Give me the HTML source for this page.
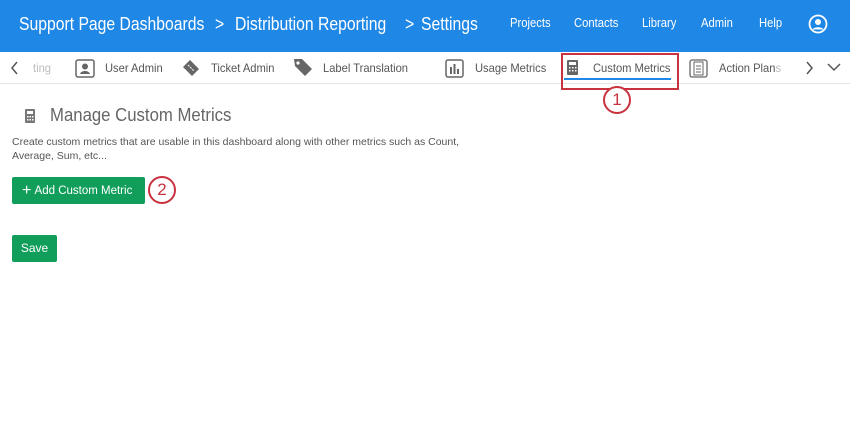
<!DOCTYPE html>
<html><head><style>
*{margin:0;padding:0;box-sizing:border-box}
body{width:850px;height:426px;background:#fff;font-family:"Liberation Sans",sans-serif;position:relative;overflow:hidden}
.a{position:absolute;white-space:nowrap}
.hd{position:absolute;left:0;top:0;width:850px;height:52px;background:#1f87e5}
.bc{color:#fff;font-size:18.5px;top:13px;transform:scaleX(0.85);transform-origin:left}
.nav{color:#fff;font-size:12.5px;top:16px;transform:scaleX(0.9);transform-origin:left}
.tab{color:#555;font-size:12px;top:61px;transform:scaleX(0.93);transform-origin:left}
.btn{background:#119e5a;color:#fff;border-radius:2px;font-size:12px}
.circ{border:2px solid #c9323f;border-radius:50%;color:#c9323f;text-align:center;background:#fff}
</style></head><body>
<div class="hd"></div>
<div class="a bc" style="left:19px">Support Page Dashboards</div>
<div class="a bc" style="left:215px">&gt;</div>
<div class="a bc" style="left:235px">Distribution Reporting</div>
<div class="a bc" style="left:405px">&gt;</div>
<div class="a bc" style="left:421px">Settings</div>
<div class="a nav" style="left:510px">Projects</div>
<div class="a nav" style="left:574px">Contacts</div>
<div class="a nav" style="left:642px">Library</div>
<div class="a nav" style="left:701px">Admin</div>
<div class="a nav" style="left:759px">Help</div>
<svg class="a" style="left:808px;top:14px" width="20" height="20" viewBox="0 0 20 20"><circle cx="10" cy="10" r="8.5" fill="none" stroke="#fff" stroke-width="1.8"/><circle cx="10" cy="8" r="3" fill="#fff"/><path d="M4.5 15.5c1.5-3 9.5-3 11 0" fill="#fff"/></svg>
<div class="a" style="left:0;top:83px;width:850px;height:1px;background:#e6e6e6"></div>
<svg class="a" style="left:10px;top:61px" width="10" height="14"><path d="M7 1L2 7l5 6" fill="none" stroke="#555" stroke-width="1.5"/></svg>
<div class="a tab" style="left:33px;color:#bbb">ting</div>
<svg class="a" style="left:75px;top:59px" width="20" height="19"><rect x="1" y="1" width="18" height="17" rx="2" fill="none" stroke="#666" stroke-width="1.5"/><circle cx="10" cy="7.5" r="3" fill="#666"/><path d="M5 15c1-4 9-4 10 0z" fill="#666"/></svg>
<div class="a tab" style="left:105px">User Admin</div>
<svg class="a" style="left:181px;top:58px" width="20" height="20"><path d="M2 9l7-7 9 9-7 7z" fill="#666"/><path d="M7 7l6 6" stroke="#fff" stroke-width="1" stroke-dasharray="2 1"/></svg>
<div class="a tab" style="left:211px">Ticket Admin</div>
<svg class="a" style="left:293px;top:57px" width="20" height="20"><path d="M1 2h8l10 10-7 7L2 9z" fill="#666"/><circle cx="5" cy="6" r="1.6" fill="#fff"/></svg>
<div class="a tab" style="left:323px">Label Translation</div>
<svg class="a" style="left:445px;top:59px" width="19" height="19"><rect x="1" y="1" width="17" height="17" rx="2" fill="none" stroke="#666" stroke-width="1.5"/><rect x="5" y="8" width="2" height="7" fill="#666"/><rect x="8.5" y="5" width="2" height="10" fill="#666"/><rect x="12" y="10" width="2" height="5" fill="#666"/></svg>
<div class="a tab" style="left:475px">Usage Metrics</div>
<svg class="a" style="left:567px;top:60px" width="11" height="15"><rect x="0" y="0" width="11" height="15" rx="1" fill="#666"/><rect x="2" y="2" width="7" height="3" fill="#fff"/><g fill="#fff"><rect x="2" y="7" width="1.5" height="1.5"/><rect x="5" y="7" width="1.5" height="1.5"/><rect x="8" y="7" width="1.5" height="1.5"/><rect x="2" y="10" width="1.5" height="1.5"/><rect x="5" y="10" width="1.5" height="1.5"/><rect x="8" y="10" width="1.5" height="1.5"/></g></svg>
<div class="a tab" style="left:593px">Custom Metrics</div>
<div class="a" style="left:564px;top:78px;width:107px;height:2px;background:#1f87e5"></div>
<div class="a" style="left:561px;top:53px;width:118px;height:37px;border:2px solid #c9323f"></div>
<div class="a circ" style="left:603px;top:86px;width:28px;height:28px;font-size:17px;line-height:24px">1</div>
<svg class="a" style="left:689px;top:58px" width="19" height="20"><rect x="1" y="2" width="17" height="17" rx="2" fill="none" stroke="#666" stroke-width="1.3"/><rect x="5" y="4" width="9" height="13" fill="none" stroke="#666"/><path d="M7 8h5M7 11h5M7 14h5" stroke="#666"/></svg>
<div class="a tab" style="left:719px">Action Plan<span style="color:#bbb">s</span></div>
<svg class="a" style="left:805px;top:61px" width="10" height="14"><path d="M2 1l5 6-5 6" fill="none" stroke="#555" stroke-width="1.5"/></svg>
<svg class="a" style="left:827px;top:63px" width="14" height="9"><path d="M1 1l6 6 6-6" fill="none" stroke="#555" stroke-width="1.5"/></svg>
<svg class="a" style="left:25px;top:109px" width="10" height="14"><rect width="10" height="14" rx="1" fill="#777"/><rect x="2" y="2" width="6" height="3" fill="#fff"/><g fill="#fff"><rect x="2" y="7" width="1.5" height="1.5"/><rect x="4.5" y="7" width="1.5" height="1.5"/><rect x="7" y="7" width="1.5" height="1.5"/><rect x="2" y="10" width="1.5" height="1.5"/><rect x="4.5" y="10" width="1.5" height="1.5"/><rect x="7" y="10" width="1.5" height="1.5"/></g></svg>
<div class="a" style="left:50px;top:105px;font-size:18px;color:#666;transform:scaleX(0.93);transform-origin:left">Manage Custom Metrics</div>
<div class="a" style="left:12px;top:135px;font-size:10.5px;color:#555;line-height:14px">Create custom metrics that are usable in this dashboard along with other metrics such as Count,<br>Average, Sum, etc...</div>
<div class="a btn" style="left:12px;top:177px;width:133px;height:27px;line-height:27px;padding-left:10px;font-size:11.5px"><span style="font-size:16px;vertical-align:-1px">+</span>&nbsp;Add Custom Metric</div>
<div class="a circ" style="left:148px;top:176px;width:28px;height:28px;font-size:17px;line-height:24px">2</div>
<div class="a btn" style="left:12px;top:235px;width:45px;height:27px;line-height:27px;text-align:center">Save</div>
</body></html>
